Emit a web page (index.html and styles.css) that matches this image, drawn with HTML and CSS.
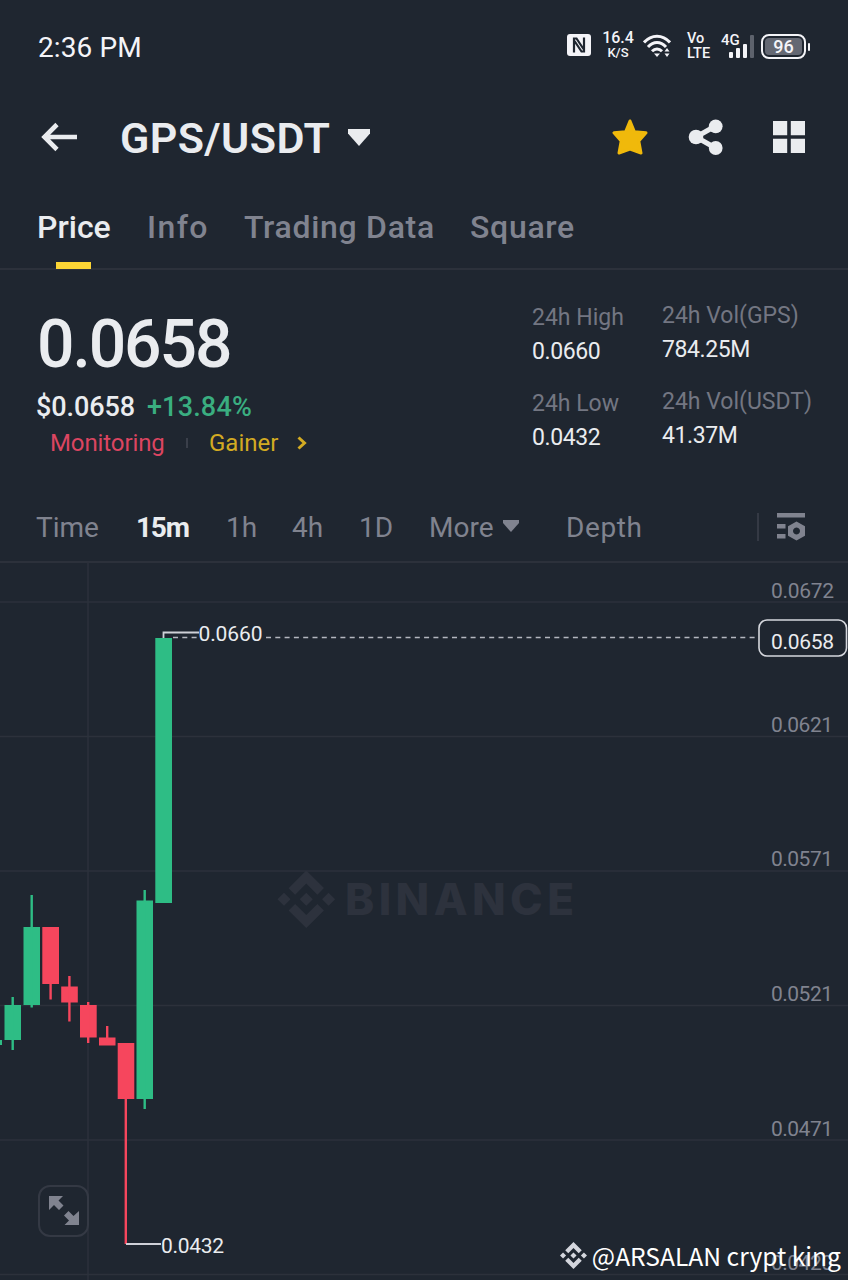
FILE: index.html
```html
<!DOCTYPE html>
<html lang="en">
<head>
    <meta charset="UTF-8">
    <meta name="viewport" content="width=device-width, initial-scale=1.0">
    <title>GPS/USDT</title>
    <link rel="stylesheet" href="styles.css">
</head>
<body>
    <div class="app">
        <div class="status-bar">
            <span class="clock">2:36 PM</span>
            <div class="status-icons">
                <svg class="nfc" width="24" height="22" viewBox="0 0 24 22">
                    <rect width="24" height="22" rx="3" fill="#f4f4f8"/>
                    <path d="M7 18.500V4.500l2.500 0L16.500 15M17 3.500v14h-2.500L7.500 7" fill="none" stroke="#1f2630" stroke-width="2.200"/>
                </svg>
                <div class="net-speed"><b>16.4</b><small>K/S</small></div>
                <svg class="wifi" width="28" height="24" viewBox="0 0 28 24" fill="none" stroke="#f4f4f8" stroke-width="3">
                    <path d="M1 8.500C8.500 .200 19.500 .200 27 8.500"/>
                    <path d="M5 13C10.500 7 17.500 7 23 13"/>
                    <path d="M9 17.300C12 14.300 16 14.300 19 17.300"/>
                    <path d="M11 19.500h6L14 23zM21.500 17.500l2.500-3.500 2.500 3.500zM21.500 19.500l2.500 3.500 2.500-3.500z" fill="#f4f4f8" stroke="none"/>
                </svg>
                <div class="volte"><span>Vo</span><span>LTE</span></div>
                <div class="signal">
                    <span>4G</span>
                    <svg width="34" height="28" viewBox="0 0 34 28" fill="#f4f4f8">
                        <rect x="8" y="20" width="4" height="6" rx="1"/>
                        <rect x="15" y="16" width="4" height="10" rx="1"/>
                        <rect x="22" y="12" width="4" height="14" rx="1"/>
                        <rect x="29" y="3" width="4" height="23" rx="1" fill="#5d626c"/>
                    </svg>
                </div>
                <div class="battery"><span>96</span></div>
            </div>
        </div>

        <header class="header">
            <svg class="back" width="38" height="30" viewBox="0 0 38 30" fill="none" stroke="#eaecef" stroke-width="4.600">
                <path d="M37 15H5M17 2.500L4.500 15 17 27.500"/>
            </svg>
            <h1>GPS/USDT</h1>
            <svg class="caret" width="22" height="17" viewBox="0 0 22 17" fill="#eaecef">
                <path d="M0 0h22v4.500L11 17 0 4.500z"/>
            </svg>
            <div class="actions">
                <svg width="36" height="36" viewBox="0 0 36 36">
                    <path d="M18 2l4.400 10.700L34 13.800l-7.200 8.100L29 34l-11-4L7 34l2.200-12.100L2 13.800l11.600-1.100z" fill="#f0b90b" stroke="#f0b90b" stroke-width="3" stroke-linejoin="round"/>
                </svg>
                <svg width="36" height="36" viewBox="0 0 36 36" fill="#eaecef">
                    <path d="M27.500 7L8 18l19.500 11" fill="none" stroke="#eaecef" stroke-width="5"/>
                    <circle cx="8" cy="18" r="7.300"/>
                    <circle cx="27.700" cy="7.300" r="6.900"/>
                    <circle cx="27.700" cy="29" r="6.900"/>
                </svg>
                <svg width="32" height="32" viewBox="0 0 32 32" fill="#eaecef">
                    <path d="M0 0h14.200v14.200H0zM17.800 0H32v14.200H17.800zM0 17.800h14.200V32H0zM17.800 17.800H32V32H17.800z"/>
                </svg>
            </div>
        </header>

        <nav class="tabs">
            <a class="tab active">Price</a>
            <a class="tab tab-info">Info</a>
            <a class="tab">Trading Data</a>
            <a class="tab">Square</a>
        </nav>

        <section class="ticker">
            <div class="price-block">
                <div class="last-price">0.0658</div>
                <div class="change">
                    <span>$0.0658</span>
                    <span class="up">+13.84%</span>
                </div>
                <div class="tags">
                    <span class="tag-red">Monitoring</span>
                    <i class="tag-sep"></i>
                    <span class="tag-yellow">Gainer</span>
                    <svg width="10" height="14" viewBox="0 0 10 14" fill="none" stroke="#d3ab22" stroke-width="3">
                        <path d="M1.500 1.500L7.500 7l-6 5.500"/>
                    </svg>
                </div>
            </div>
            <dl class="stats">
                <div><dt>24h High</dt><dd>0.0660</dd></div>
                <div><dt>24h Low</dt><dd>0.0432</dd></div>
            </dl>
            <dl class="stats stats-vol">
                <div><dt>24h Vol(GPS)</dt><dd>784.25M</dd></div>
                <div><dt>24h Vol(USDT)</dt><dd>41.37M</dd></div>
            </dl>
        </section>

        <div class="intervals">
            <span>Time</span>
            <span class="active">15m</span>
            <span>1h</span>
            <span>4h</span>
            <span>1D</span>
            <span class="more">More
                <svg width="16" height="12" viewBox="0 0 16 12" fill="#80838f"><path d="M0 0h16v3L8 12 0 3z"/></svg>
            </span>
            <span class="depth">Depth</span>
            <i class="divider"></i>
            <svg class="settings" width="29" height="28" viewBox="0 0 29 28" fill="#80838f">
                <path d="M0 0h28v4.500H0zM0 11h8.500v4.500H0zM0 21h8.500v4.500H0z"/>
                <path fill-rule="evenodd" d="M19.500 8.500l8.500 4.700v9.600l-8.500 4.700-8.500-4.700v-9.600zM19.500 14.500a3.500 3.500 0 1 0 .01 0z"/>
            </svg>
        </div>

        <div class="chart">
            <svg width="848" height="718" viewBox="0 562 848 718">
                <defs>
                    <path id="logo" d="M16.624 13.920l2.718 2.716-7.353 7.353-7.353-7.353 2.717-2.716 4.636 4.660zM21.261 9.284L24 12l-2.715 2.716L18.568 12zM11.989 9.285l2.716 2.691-2.716 2.718L9.272 12zM2.716 9.284L5.409 12l-2.692 2.692L0 12zM11.989.012l7.353 7.329-2.718 2.715-4.635-4.635-4.636 4.659-2.717-2.715z"/>
                </defs>

                <!-- grid -->
                <path class="grid" d="M0 602h848M0 736.500h848M0 871h848M0 1005.500h848M0 1140h848M0 1274.500h848M88 562v718"/>

                <!-- watermark -->
                <g class="watermark">
                    <use href="#logo" transform="translate(277.500 870.500) scale(2.400)"/>
                    <text x="345" y="915" textLength="229">BINANCE</text>
                </g>

                <!-- candles -->
                <g class="up">
                    <path d="M0 1040h2v5H0zM4.500 1005H21v35H4.500zM23.500 927H40v78H23.500zM136.500 900.500H153V1099h-16.500zM155.300 638H172v265h-16.700z"/>
                    <path class="wick" d="M12.700 997v53M31.700 895v112.500M144.700 890v219"/>
                </g>
                <g class="down">
                    <path d="M42.300 927H59v57H42.300zM61.200 986.500h16.600v16H61.200zM80 1005h16.700v32.500H80zM99 1037.500h16.500v8H99zM117.700 1043h16.600v56h-16.600z"/>
                    <path class="wick" d="M50.600 984v15.500M69.400 976v45.500M88.200 1002v41M107.200 1026v14M125.800 1095v149"/>
                </g>

                <!-- high / low markers -->
                <path class="dash" d="M173 637.500h25M266 637.500h492"/>
                <path class="marker" d="M163.500 638v-5.500H199M126 1244h35"/>
                <text class="mark" x="198.500" y="641" textLength="64">0.0660</text>
                <text class="mark" x="161" y="1253" textLength="63">0.0432</text>

                <!-- price axis -->
                <g class="axis">
                    <text x="771" y="598" textLength="63">0.0672</text>
                    <text x="771" y="732" textLength="62">0.0621</text>
                    <text x="771" y="866" textLength="62">0.0571</text>
                    <text x="771" y="1001" textLength="62">0.0521</text>
                    <text x="771" y="1136" textLength="62">0.0471</text>
                    <text x="771" y="1270" textLength="62">0.0420</text>
                </g>
                <rect class="current" x="759" y="620" width="87.500" height="36" rx="8"/>
                <text class="mark" x="771" y="649" textLength="63">0.0658</text>
            </svg>

            <button class="expand" aria-label="Expand">
                <svg width="30" height="30" viewBox="0 0 30 30" fill="#80838f">
                    <path d="M0 0h14l-4.500 4.500 5 5-4.500 4.500-5-5L0 14zM30 29H15.500l4.500-4.500-5-5 4.500-4.500 5 5L30 15z"/>
                </svg>
            </button>

            <div class="author">
                <svg width="27" height="27" viewBox="0 0 24 24" fill="#d4d6dd"><use href="#logo"/></svg>
                <span>@ARSALAN crypt king</span>
            </div>
        </div>
    </div>
</body>
</html>
```
FILE: styles.css
```css
:root {
    --bg: #1f2630;
    --line: #2c313b;
    --text: #eaecef;
    --muted: #80838f;
    --green: #2ebd85;
    --red: #f6465d;
    --yellow: #fcd535;
}

* {
    margin: 0;
    padding: 0;
    box-sizing: border-box;
}

body {
    background: var(--bg);
    color: var(--text);
    font-family: Roboto, sans-serif;
    overflow: hidden;
}

svg {
    display: block;
    flex: none;
}

.app {
    width: 848px;
    height: 1280px;
    display: flex;
    flex-direction: column;
    overflow: hidden;
    white-space: nowrap;
}

/* status bar */
.status-bar {
    height: 92px;
    padding: 0 42px 0 38px;
    display: flex;
    justify-content: space-between;
    align-items: center;
}

.clock {
    padding-top: 2px;
    font-size: 28px;
    letter-spacing: 0.1px;
    color: #f4f4f8;
}

.status-icons {
    display: flex;
    align-items: center;
    color: #f4f4f8;
}

.nfc {
    margin-top: -2px;
}

.net-speed {
    width: 32px;
    margin: -2px 0 0 11px;
    text-align: center;
    line-height: 15px;
}

.net-speed b,
.net-speed small {
    display: block;
    font-weight: 500;
}

.net-speed b {
    font-size: 16px;
}

.net-speed small {
    font-size: 13px;
}

.wifi {
    margin-left: 9px;
}

.volte {
    width: 24px;
    margin-left: 16px;
    font-size: 14.5px;
    font-weight: 500;
    line-height: 15px;
}

.volte span {
    display: block;
}

.signal {
    position: relative;
    margin-left: 10px;
}

.signal span {
    position: absolute;
    left: 0;
    top: -1px;
    font-size: 15px;
    font-weight: 500;
}

.battery {
    position: relative;
    width: 45px;
    height: 25px;
    margin-left: 6px;
    padding: 2px;
    border: 2px solid #f4f4f8;
    border-radius: 8px;
}

.battery span {
    display: block;
    height: 17px;
    border-radius: 4px;
    background: #646873;
    font-size: 18px;
    font-weight: 500;
    line-height: 18px;
    text-align: center;
}

.battery::after {
    content: "";
    position: absolute;
    right: -6px;
    top: 7px;
    width: 2px;
    height: 8px;
    border-radius: 1px;
    background: #f4f4f8;
}

/* header */
.header {
    height: 92px;
    padding: 0 43px 2px 40px;
    display: flex;
    align-items: center;
}

.header h1 {
    width: 209px;
    margin: 2px 0 0 42px;
    font-size: 43px;
    font-weight: 600;
    letter-spacing: 0.4px;
}

.caret {
    margin-left: 19px;
}

.actions {
    display: flex;
    align-items: center;
    margin-left: auto;
}

.actions svg + svg {
    margin-left: 40px;
}

.actions svg:last-child {
    margin-left: 49px;
}

/* tabs */
.tabs {
    height: 86px;
    padding: 24px 0 0 37px;
    display: grid;
    grid-template-columns: 110px 97px 226px auto;
    border-bottom: 2px solid var(--line);
}

.tab {
    position: relative;
    font-size: 32px;
    font-weight: 500;
    line-height: 38px;
    letter-spacing: 0.7px;
    color: var(--muted);
}

.tab-info {
    letter-spacing: 1.4px;
}

.tab.active {
    color: var(--text);
    letter-spacing: 0;
}

.tab.active::after {
    content: "";
    position: absolute;
    left: 19px;
    top: 54px;
    width: 35px;
    height: 7px;
    background: var(--yellow);
}

/* ticker */
.ticker {
    height: 222px;
    display: grid;
    grid-template-columns: 495px 130px auto;
    padding-left: 37px;
}

.last-price {
    margin-top: 40px;
    font-size: 66px;
    font-weight: 500;
    line-height: 70px;
    letter-spacing: -2.1px;
}

.change {
    display: flex;
    gap: 12px;
    margin: 10px 0 0 -1px;
    font-size: 27px;
    font-weight: 500;
    line-height: 34px;
}

.change span {
    letter-spacing: -0.1px;
}

.change .up {
    color: #3aae80;
    letter-spacing: 0.2px;
}

.tags {
    display: flex;
    align-items: center;
    margin: 3px 0 0 13px;
    font-size: 24px;
    line-height: 32px;
}

.tag-red {
    width: 136px;
    color: #dc4561;
    letter-spacing: -0.1px;
}

.tag-sep {
    width: 2px;
    height: 10px;
    background: #3a3f4a;
}

.tag-yellow {
    width: 88px;
    margin-left: 21px;
    color: #d3ab22;
}

.stats {
    padding-top: 32px;
    font-size: 23px;
}

.stats-vol {
    padding-top: 30px;
}

.stats div {
    height: 86px;
}

.stats dt {
    line-height: 32px;
    color: #737682;
}

.stats dd {
    line-height: 35px;
    letter-spacing: -0.4px;
}

/* intervals */
.intervals {
    height: 71px;
    padding: 0 0 0 36px;
    display: grid;
    grid-template-columns: 100px 90px 66px 67px 70px 137px 191px 20px auto;
    align-items: center;
    border-bottom: 2px solid var(--line);
    font-size: 28px;
    color: var(--muted);
}

.intervals span {
    padding-top: 2px;
}

.intervals .active {
    color: var(--text);
    font-weight: 700;
    letter-spacing: -1.2px;
}

.intervals .depth {
    letter-spacing: 0.6px;
}

.more {
    display: flex;
    align-items: center;
    gap: 9px;
}

.more svg {
    margin-top: -4px;
}

.divider {
    width: 2px;
    height: 28px;
    background: #343944;
}

/* chart */
.chart {
    position: relative;
    height: 718px;
    margin-top: -1px;
}

.grid {
    fill: none;
    stroke: var(--line);
    stroke-width: 1.5;
}

.watermark {
    fill: #2d323d;
    font: 800 44px Inter, sans-serif;
}

.chart .up {
    fill: var(--green);
    stroke: var(--green);
    stroke-width: 0;
}

.chart .down {
    fill: var(--red);
    stroke: var(--red);
    stroke-width: 0;
}

.chart .wick {
    stroke-width: 2.4;
}

.marker {
    fill: none;
    stroke: #cfd1d8;
    stroke-width: 1.8;
}

.dash {
    stroke: #b4b7bf;
    stroke-width: 1.6;
    stroke-dasharray: 5 4.3;
}

.mark {
    fill: var(--text);
    font-size: 21px;
}

.axis {
    fill: var(--muted);
    font-size: 21px;
}

.current {
    fill: var(--bg);
    stroke: #d5d7dd;
    stroke-width: 1.6;
}

.expand {
    position: absolute;
    left: 38px;
    top: 623px;
    width: 51px;
    height: 52px;
    border: 2px solid #343944;
    border-radius: 12px;
    background: none;
    display: flex;
    align-items: center;
    justify-content: center;
}

.author {
    position: absolute;
    right: 7px;
    bottom: 7px;
    display: flex;
    align-items: center;
    gap: 5px;
    color: #fff;
    font-family: "Noto Sans CJK SC", sans-serif;
    font-size: 24.6px;
    line-height: 36px;
}
```
